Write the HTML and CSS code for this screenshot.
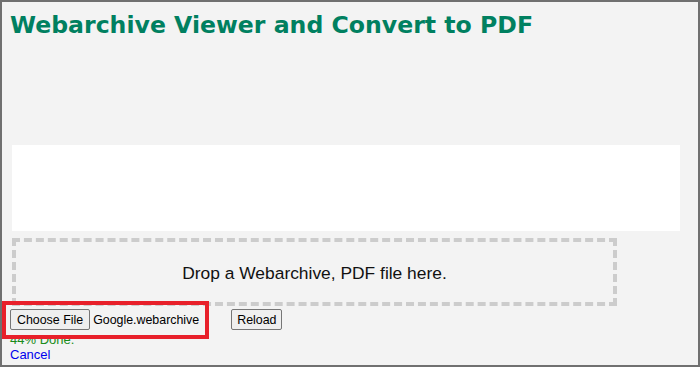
FILE: index.html
```html
<!DOCTYPE html>
<html>
<head>
<meta charset="utf-8">
<link rel="stylesheet" href="styles.css">
</head>
<body>
<div class="frame">
  <h1 class="title">Webarchive Viewer and Convert to PDF</h1>
  <div class="preview"></div>
  <div class="drop">Drop a Webarchive, PDF file here.</div>
  <div class="controls">
    <div class="file">
      <button class="btn">Choose File</button>
      <span class="fname">Google.webarchive</span>
      <div class="mark"></div>
    </div>
    <button class="btn reload">Reload</button>
  </div>
  <div class="status">44% Done.</div>
  <a class="cancel" href="#">Cancel</a>
</div>
</body>
</html>
```
FILE: styles.css
```css
* { box-sizing: border-box; }
html, body { margin: 0; padding: 0; }
body { width: 700px; height: 367px; font-family: "Liberation Sans", Arial, sans-serif; }
.frame {
  width: 700px; height: 367px;
  background: #f3f3f3;
  border: 2px solid #707070;
  padding: 0 0 0 8px;
  position: relative;
}
.title {
  margin: 0;
  padding-top: 8px;
  font-family: "DejaVu Sans", Verdana, sans-serif;
  font-weight: bold;
  font-size: 23.6px;
  line-height: 30px;
  color: #008060;
  height: 143px;
}
.preview {
  margin-left: 2px;
  width: 668px;
  height: 86px;
  background: #ffffff;
}
.drop {
  margin-top: 7px;
  margin-left: 2px;
  width: 605px;
  height: 68px;
  border: 4px dashed #cccccc;
  display: flex;
  align-items: center;
  justify-content: center;
  font-size: 17.4px;
  color: #111;
  padding-top: 2px;
}
.controls {
  display: flex;
  align-items: center;
  margin-top: 3px;
  height: 21px;
}
.file { position: relative; display: flex; align-items: center; }
.btn {
  font-family: "Liberation Sans", Arial, sans-serif;
  font-size: 12.4px;
  height: 21px;
  padding: 0 6px;
  background: #efefef;
  border: 1px solid #767676;
  border-radius: 2px;
  color: #000;
}
.fname { font-size: 12.4px; margin-left: 3px; color: #000; }
.reload { margin-left: 32px; padding: 0 5px; }
.mark {
  position: absolute;
  left: -8px; top: -8px;
  width: 207px; height: 38px;
  border: 4px solid #e8202a;
}
.status { color: #1a8c1a; font-size: 13px; line-height: 15px; margin-top: 2px; }
.cancel { display: block; color: #0000ee; font-size: 13px; line-height: 15px; text-decoration: none; }
```
